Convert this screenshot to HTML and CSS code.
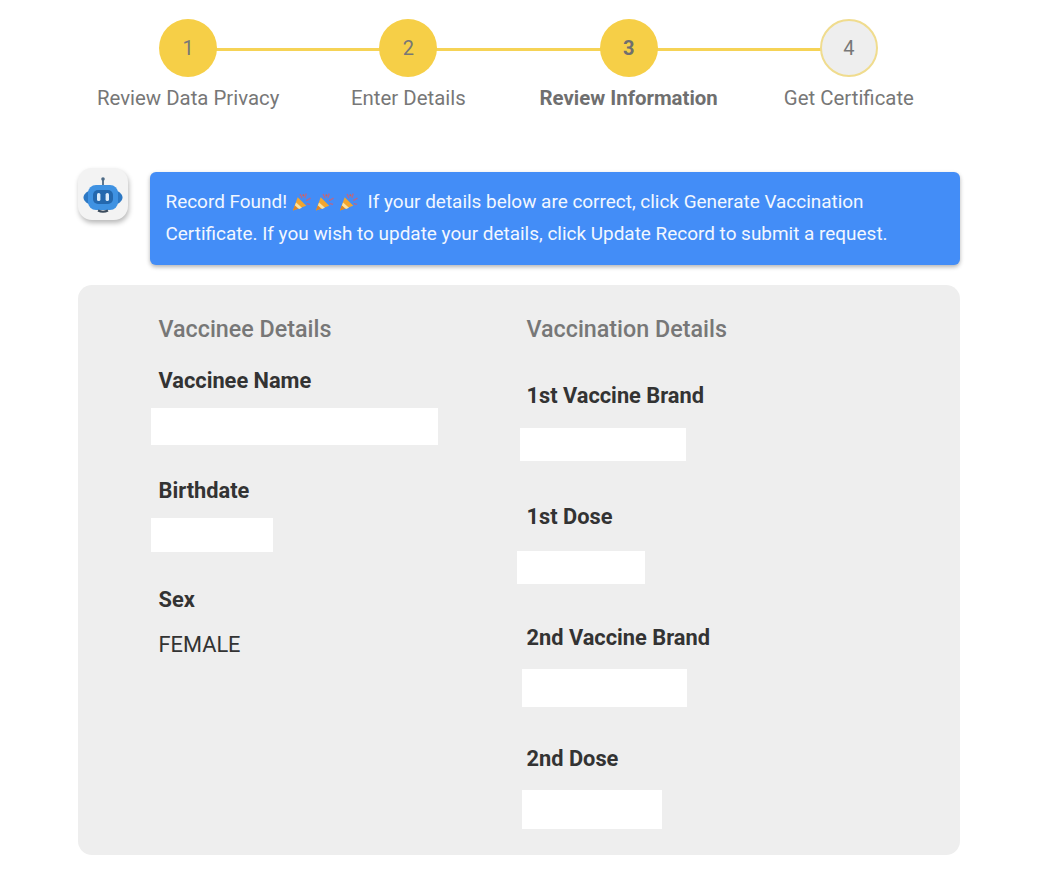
FILE: index.html
```html
<!DOCTYPE html>
<html lang="en">
<head>
<meta charset="utf-8">
<title>Review Information</title>
<link rel="stylesheet" href="styles.css">
</head>
<body>
<svg class="defs" width="0" height="0" aria-hidden="true">
  <symbol id="popper" viewBox="0 0 20 20">
    <path d="M1 19 6 5l9 9z" fill="#f2a52f"/>
    <path d="M4.300 10.500 10.500 16l-3 1.300-4.500-3.500z" fill="#fce2a0"/>
    <path d="M1 19l2-5.200 3.400 3.300z" fill="#dd8428"/>
    <path d="M8.500 1.500 10.500 6M15 1l-1.500 4.500M19.500 6l-4.500 2.500M19 12.500l-3.500-.8" stroke="#b5688e" stroke-width="1.500" fill="none"/>
    <circle cx="12" cy="3" r="1.100" fill="#d8634c"/>
  </symbol>
</svg>

<ol class="stepper">
  <li class="step"><span class="dot">1</span><span class="step-label">Review Data Privacy</span></li>
  <li class="step"><span class="dot">2</span><span class="step-label">Enter Details</span></li>
  <li class="step current"><span class="dot">3</span><span class="step-label">Review Information</span></li>
  <li class="step pending"><span class="dot">4</span><span class="step-label">Get Certificate</span></li>
</ol>

<section class="notice-row">
  <div class="avatar">
    <svg width="44" height="42" viewBox="0 0 44 42">
      <path d="M22 6v7" stroke="#4d6a85" stroke-width="1.800"/>
      <circle cx="22" cy="6" r="1.800" fill="#4d6a85"/>
      <path d="M8 18c-3 1-5.500 4-5.500 6.500S5 30 8 31z" fill="#2c78c4"/>
      <path d="M36 18c3 1 5.500 4 5.500 6.500S39 30 36 31z" fill="#2c78c4"/>
      <rect x="7" y="12" width="30" height="25" rx="8" fill="#3f92e2"/>
      <rect x="12" y="17" width="20" height="14" rx="5" fill="#2468ae"/>
      <rect x="16" y="20" width="3.400" height="8" rx="1.600" fill="#dcecfa"/>
      <rect x="24.600" y="20" width="3.400" height="8" rx="1.600" fill="#dcecfa"/>
      <path d="M17 37.500c3 1.500 7 1.500 10 0" stroke="#3b4b5c" stroke-width="2.200" fill="none"/>
    </svg>
  </div>
  <p class="notice">
    <span class="notice-line">Record Found!
      <svg class="popper" width="19" height="20"><use href="#popper"/></svg>
      <svg class="popper" width="19" height="20"><use href="#popper"/></svg>
      <svg class="popper" width="19" height="20"><use href="#popper"/></svg>
      &nbsp;If your details below are correct, click Generate Vaccination</span>
    <span class="notice-line">Certificate. If you wish to update your details, click Update Record to submit a request.</span>
  </p>
</section>

<main class="card">
  <section class="col">
    <h2 class="col-title">Vaccinee Details</h2>
    <h3 class="label l-name">Vaccinee Name</h3>
    <div class="mask m-name"></div>
    <h3 class="label l-birth">Birthdate</h3>
    <div class="mask m-birth"></div>
    <h3 class="label l-sex">Sex</h3>
    <p class="value">FEMALE</p>
  </section>
  <section class="col">
    <h2 class="col-title">Vaccination Details</h2>
    <h3 class="label l-brand1">1st Vaccine Brand</h3>
    <div class="mask m-brand1"></div>
    <h3 class="label l-dose1">1st Dose</h3>
    <div class="mask m-dose1"></div>
    <h3 class="label l-brand2">2nd Vaccine Brand</h3>
    <div class="mask m-brand2"></div>
    <h3 class="label l-dose2">2nd Dose</h3>
    <div class="mask m-dose2"></div>
  </section>
</main>
</body>
</html>
```
FILE: styles.css
```css
* { box-sizing: border-box; }
html, body { margin: 0; padding: 0; background: #fff; }
body {
  width: 1042px;
  height: 877px;
  overflow: hidden;
  font-family: Roboto, "Liberation Sans", sans-serif;
  color: #333;
}
.defs { position: absolute; }

/* Stepper */
.stepper {
  list-style: none;
  margin: 0 83px 0 78px;
  padding: 19px 0 0;
  display: grid;
  grid-template-columns: repeat(4, 1fr);
}
.step {
  position: relative;
  display: flex;
  flex-direction: column;
  align-items: center;
  gap: 9px;
}
.step:not(:last-child)::after {
  content: "";
  position: absolute;
  top: 29px;
  left: 50%;
  width: 100%;
  height: 3px;
  background: #f6d356;
}
.dot {
  position: relative;
  z-index: 1;
  width: 58px;
  height: 58px;
  border-radius: 50%;
  background: #f6cf47;
  color: #777;
  display: flex;
  align-items: center;
  justify-content: center;
  font-size: 20px;
}
.step-label {
  font-size: 20.400px;
  line-height: 25px;
  color: #777;
  white-space: nowrap;
}
.current .dot { font-weight: 700; color: #6f6f6f; }
.current .step-label { font-weight: 700; color: #6f6f6f; }
.pending .dot {
  background: #eee;
  border: 2px solid #f0dc8e;
}

/* Notice */
.notice-row {
  margin: 61px 82px 0 78px;
  display: flex;
  align-items: flex-start;
  gap: 22px;
}
.avatar {
  flex: none;
  width: 50px;
  height: 52px;
  margin-top: -4px;
  border-radius: 14px;
  background: #f3f3f3;
  box-shadow: 1px 3px 5px rgba(0, 0, 0, 0.28);
  display: flex;
  align-items: center;
  justify-content: center;
}
.notice {
  flex: 1;
  margin: 0;
  height: 93px;
  padding: 14px 16px 15px 15.500px;
  border-radius: 6px;
  background: #438df7;
  color: #f2f7ff;
  font-size: 18.950px;
  line-height: 32px;
  box-shadow: 0 2px 4px rgba(0, 0, 0, 0.3);
}
.notice-line { display: block; white-space: nowrap; }
.popper { vertical-align: -4px; }

/* Card */
.card {
  margin: 20px 82px 0 78px;
  height: 570px;
  padding: 30px 0 0 80.500px;
  border-radius: 14px;
  background: #eee;
  display: grid;
  grid-template-columns: 368px 1fr;
}
.col-title {
  margin: 0;
  font-size: 23.300px;
  line-height: 28px;
  font-weight: 500;
  color: #777;
}
.label {
  margin: 0;
  font-size: 21.800px;
  line-height: 26px;
  font-weight: 700;
  color: #333;
}
.value {
  margin: 19px 0 0;
  font-size: 21.800px;
  line-height: 26px;
  color: #333;
}
.mask { background: #fff; }

.l-name { margin-top: 25px; }
.m-name { margin: 14px 0 0 -7.500px; width: 287px; height: 37px; }
.l-birth { margin-top: 33px; }
.m-birth { margin: 14px 0 0 -7.500px; width: 122px; height: 34px; }
.l-sex { margin-top: 35px; }

.l-brand1 { margin-top: 40px; }
.m-brand1 { margin: 19px 0 0 -6.500px; width: 166px; height: 33px; }
.l-dose1 { margin-top: 43px; }
.m-dose1 { margin: 21px 0 0 -9.500px; width: 128px; height: 33px; }
.l-brand2 { margin-top: 41px; }
.m-brand2 { margin: 18px 0 0 -4.500px; width: 165px; height: 38px; }
.l-dose2 { margin-top: 39px; }
.m-dose2 { margin: 18px 0 0 -4.500px; width: 140px; height: 39px; }
```
